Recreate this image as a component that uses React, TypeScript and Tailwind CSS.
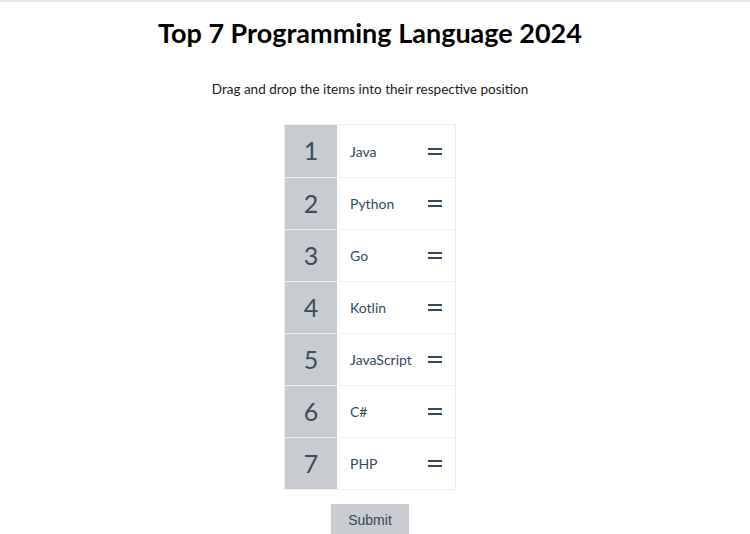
import React from "react";

const items = ["Java", "Python", "Go", "Kotlin", "JavaScript", "C#", "PHP"];

export default function App() {
  return (
    <div className="min-h-[534px] w-full bg-white border-t-2 border-[#e6e6e6] font-['Lato',sans-serif]">
      <div className="w-[740px] flex flex-col items-center">
        <h1 className="mt-[13px] text-[27px] leading-[36px] font-bold text-black">Top 7 Programming Language 2024</h1>
        <p className="mt-[28px] text-[13.5px] leading-[20px] text-[#222]">Drag and drop the items into their respective position</p>
        <ul className="mt-[25px] border border-[#eee] flex flex-col">
          {items.map((it, i) => (
            <li key={it} className={`flex h-[52px] ${i > 0 ? "border-t border-[#eee]" : ""}`}>
              <div className="w-[52px] bg-[#c8cbcf] flex items-center justify-center text-[25px] text-[#3b4d5f]">{i + 1}</div>
              <div className="w-[118px] flex items-center justify-between pl-[13px] pr-[13px] bg-white">
                <span className="text-[14px] text-[#34495e]">{it}</span>
                <span className="flex flex-col gap-[3px]">
                  <span className="block w-[14px] h-[2px] bg-[#34495e]"></span>
                  <span className="block w-[14px] h-[2px] bg-[#34495e]"></span>
                </span>
              </div>
            </li>
          ))}
        </ul>
        <button className="mt-[14px] bg-[#c8cbcf] px-[17px] h-[32px] text-[14px] text-[#34495e] font-['Liberation_Sans',sans-serif]">Submit</button>
      </div>
    </div>
  );
}
